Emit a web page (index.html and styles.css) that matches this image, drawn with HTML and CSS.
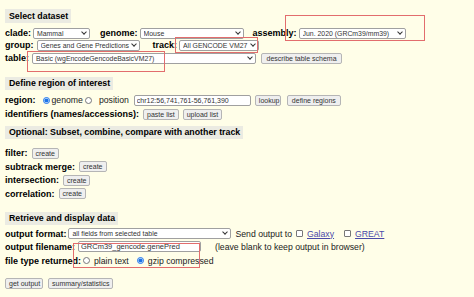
FILE: index.html
```html
<!DOCTYPE html>
<html lang="en">
<head>
    <meta charset="UTF-8">
    <title>Table Browser</title>

    <link rel="stylesheet" href="styles.css">
</head>
<body>

<form class="page" action="#" name="mainForm">

    <div class="section section--first"><span class="section__title">Select dataset</span></div>
    <div class="row row--clade">
        <span class="label">clade:</span>
        <span class="selbox selbox--clade"><select class="sel"><option>Mammal</option></select></span>
        <span class="label label--genome">genome:</span>
        <span class="selbox selbox--genome"><select class="sel"><option>Mouse</option></select></span>
        <span class="label label--assembly">assembly:</span>
        <span class="selbox selbox--assembly"><select class="sel"><option>Jun. 2020 (GRCm39/mm39)</option></select></span>
    </div>
    <div class="row row--group">
        <span class="label">group:</span>
        <span class="selbox selbox--group"><select class="sel"><option>Genes and Gene Predictions</option></select></span>
        <span class="label label--track">track:</span>
        <span class="selbox selbox--track"><select class="sel"><option>All GENCODE VM27</option></select></span>
    </div>
    <div class="row row--table">
        <span class="label">table:</span>
        <span class="selbox selbox--table"><select class="sel"><option>Basic (wgEncodeGencodeBasicVM27)</option></select></span>
        <button type="button" class="btn btn--describe">describe table schema</button>
    </div>

    <div class="section section--region"><span class="section__title">Define region of interest</span></div>
    <div class="row row--region">
        <span class="label">region:</span>
        <input type="radio" name="hgta_regionType" class="radio radio--genome" checked>
        <span class="txt">genome</span>
        <input type="radio" name="hgta_regionType" class="radio radio--position">
        <span class="txt txt--position">position</span>
        <input type="text" class="field field--position" value="chr12:56,741,761-56,761,390">
        <button type="button" class="btn btn--lookup">lookup</button>
        <button type="button" class="btn btn--define">define regions</button>
    </div>
    <div class="row row--ids">
        <span class="label">identifiers (names/accessions):</span>
        <button type="button" class="btn">paste list</button>
        <button type="button" class="btn btn--upload">upload list</button>
    </div>

    <div class="section section--optional"><span class="section__title">Optional: Subset, combine, compare with another track</span></div>
    <div class="row row--filter">
        <span class="label">filter:</span>
        <button type="button" class="btn">create</button>
    </div>
    <div class="row row--sub">
        <span class="label">subtrack merge:</span>
        <button type="button" class="btn">create</button>
    </div>
    <div class="row row--sub">
        <span class="label">intersection:</span>
        <button type="button" class="btn">create</button>
    </div>
    <div class="row row--sub">
        <span class="label">correlation:</span>
        <button type="button" class="btn">create</button>
    </div>

    <div class="section section--output"><span class="section__title">Retrieve and display data</span></div>
    <div class="row row--format">
        <span class="label">output format:</span>
        <span class="selbox selbox--format"><select class="sel"><option>all fields from selected table</option></select></span>
        <span class="txt txt--send">Send output to</span>
        <span class="check"></span>
        <a href="#" class="link">Galaxy</a>
        <span class="check check--great"></span>
        <a href="#" class="link">GREAT</a>
    </div>
    <div class="row row--file">
        <span class="label">output filename:</span>
        <input type="text" class="field field--file" value="GRCm39_gencode.genePred">
        <span class="txt txt--hint">(leave blank to keep output in browser)</span>
    </div>
    <div class="row row--type">
        <span class="label">file type returned:</span>
        <input type="radio" name="hgta_compressType" class="radio radio--plain">
        <span class="txt">plain text</span>
        <input type="radio" name="hgta_compressType" class="radio radio--gzip" checked>
        <span class="txt">gzip compressed</span>
    </div>

    <div class="row row--submit">
        <button type="submit" class="btn btn--get">get output</button>
        <button type="button" class="btn btn--summary">summary/statistics</button>
    </div>

</form>

<!-- annotation boxes drawn over the form -->
<div class="mark mark--assembly"></div>
<div class="mark mark--track"></div>
<div class="mark mark--table"></div>
<div class="mark mark--file"></div>

</body>
</html>
```

FILE: styles.css
```css
body{
    margin: 0;
    background-color: #fffee8;
    font-family: "Liberation Sans", Arial, sans-serif;
    font-size: 8.7px;
    color: #000;
}
.page{
    padding: 9px 5px 0;
    display: flex;
    flex-direction: column;
    align-items: flex-start;
}
.section{
    height: 13px;
}
.section__title{
    display: inline-block;
    height: 13px;
    line-height: 13px;
    padding: 0 3px 0 4px;
    background-color: #ebebe2;
    font-weight: bold;
    font-size: 8.8px;
}
.section--first .section__title{
    height: 14px;
    line-height: 14px;
}
.section--region{
    margin-top: 13px;
}
.section--optional{
    margin-top: 6px;
}
.section--output{
    margin-top: 12px;
}
.row{
    display: flex;
    align-items: center;
    height: 12px;
    white-space: nowrap;
}
.row--clade{
    margin-top: 5px;
}
.row--table{
    margin-top: 1px;
}
.row--region{
    margin-top: 4px;
}
.row--ids{
    margin-top: 2px;
}
.row--filter{
    margin-top: 8px;
}
.row--sub{
    margin-top: 1.5px;
}
.row--format{
    margin-top: 3px;
}
.row--file{
    margin-top: 1px;
}
.row--type{
    margin-top: 2px;
}
.row--submit{
    margin-top: 11px;
}
.label{
    font-weight: bold;
    font-size: 9px;
    margin-right: 2px;
}
.label--genome{
    margin-left: 10px;
}
.label--assembly{
    margin-left: 9px;
}
.label--track{
    margin-left: 13px;
}
.txt{
    color: #222;
}

/* selects with a small chevron */
.selbox{
    position: relative;
    display: block;
    height: 11px;
}
.selbox::after{
    content: '';
    position: absolute;
    right: 4px;
    top: 2px;
    width: 3px;
    height: 3px;
    border-right: 1.2px solid #333;
    border-bottom: 1.2px solid #333;
    transform: rotate(45deg);
    pointer-events: none;
}
.sel{
    appearance: none;
    -webkit-appearance: none;
    display: block;
    box-sizing: border-box;
    width: 100%;
    height: 11px;
    margin: 0;
    padding: 0 9px 0 3px;
    font-family: "Liberation Sans", Arial, sans-serif;
    font-size: 6.9px;
    line-height: 9px;
    color: #333;
    background-color: #fff;
    border: 1px solid #a0a0a0;
    border-radius: 2px;
}
.selbox--clade{ width: 57px; }
.selbox--genome{ width: 104px; }
.selbox--assembly{ width: 107px; }
.selbox--group{ width: 103px; margin-left: 1px; }
.selbox--track{ width: 80px; }
.selbox--table{ width: 224px; margin-left: 1px; }
.selbox--format{ width: 163px; }

.btn{
    box-sizing: border-box;
    height: 11px;
    padding: 0 3px;
    margin-left: 2px;
    font-family: "Liberation Sans", Arial, sans-serif;
    font-size: 7px;
    line-height: 9px;
    color: #333;
    background-color: #efefef;
    border: 1px solid #b5b5b5;
    border-radius: 2px;
}
.btn--describe{
    width: 81px;
    margin-left: 5px;
}
.btn--lookup{
    width: 26px;
    margin-left: 4px;
}
.btn--define{
    width: 54px;
    margin-left: 6px;
}
.btn--upload{
    margin-left: 4px;
}
.btn--get{
    width: 38px;
    margin-left: 0;
}
.btn--summary{
    width: 65px;
    margin-left: 5px;
}
.field{
    box-sizing: border-box;
    height: 11px;
    padding: 0 2px;
    font-family: "Liberation Sans", Arial, sans-serif;
    font-size: 7px;
    color: #333;
    background-color: #fff;
    border: 1px solid #a0a0a0;
    border-radius: 2px;
}
.field--position{
    width: 117px;
    margin-left: 5px;
}
.field--file{
    width: 123px;
    margin-left: 1px;
    font-size: 7.5px;
}
.radio{
    width: 7px;
    height: 7px;
    margin: 0 2px 0 0;
    accent-color: #1a73e8;
}
.radio--genome{
    margin-left: 5px;
}
.radio--position{
    margin-left: 2px;
    margin-right: 7px;
}
.radio--plain{
    margin-left: 0;
    margin-right: 4px;
}
.radio--gzip{
    margin-left: 8px;
    margin-right: 4px;
}
.check{
    display: block;
    box-sizing: border-box;
    width: 7px;
    height: 7px;
    margin: 0 4px 0 4px;
    border: 1px solid #777;
    border-radius: 1px;
    background-color: #fff;
}
.check--great{
    margin-left: 10px;
}
.link{
    color: #4a4aa8;
}
.txt--send{
    margin-left: 4px;
}
.txt--hint{
    margin-left: 14px;
}

/* red annotation frames */
.mark{
    position: absolute;
    box-sizing: border-box;
    border: 1px solid #e26d6d;
}
.mark--assembly{
    left: 285px;
    top: 15px;
    width: 140px;
    height: 26px;
}
.mark--track{
    left: 175px;
    top: 37px;
    width: 83px;
    height: 16px;
}
.mark--table{
    left: 27px;
    top: 51px;
    width: 138px;
    height: 21px;
}
.mark--file{
    left: 73px;
    top: 243px;
    width: 127px;
    height: 25px;
}
```
